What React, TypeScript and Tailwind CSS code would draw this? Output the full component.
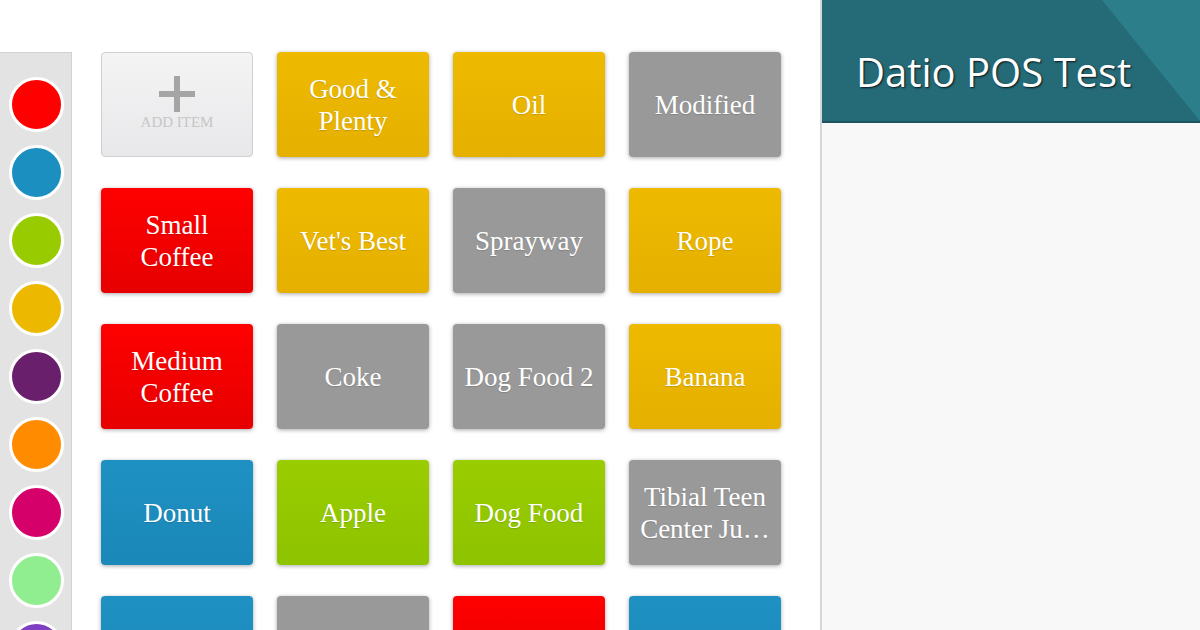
import React from "react";

type Tile = { label: string; color: string };

const swatches = [
  "bg-[#ff0000]",
  "bg-[#1b8fc0]",
  "bg-[#99cc00]",
  "bg-[#ecb800]",
  "bg-[#6a1f6d]",
  "bg-[#ff8c00]",
  "bg-[#d6006b]",
  "bg-[#90ee90]",
  "bg-[#7e3fc0]",
];

const colors: Record<string, string> = {
  yellow: "bg-gradient-to-b from-[#eeba00] to-[#e5b000]",
  gray: "bg-[#999999]",
  red: "bg-gradient-to-b from-[#ff0000] to-[#e60000]",
  blue: "bg-gradient-to-b from-[#1e91c2] to-[#1a88b9]",
  green: "bg-gradient-to-b from-[#9acd00] to-[#8dc300]",
};

const tiles: Tile[] = [
  { label: "Good & Plenty", color: "yellow" },
  { label: "Oil", color: "yellow" },
  { label: "Modified", color: "gray" },
  { label: "Small Coffee", color: "red" },
  { label: "Vet's Best", color: "yellow" },
  { label: "Sprayway", color: "gray" },
  { label: "Rope", color: "yellow" },
  { label: "Medium Coffee", color: "red" },
  { label: "Coke", color: "gray" },
  { label: "Dog Food 2", color: "gray" },
  { label: "Banana", color: "yellow" },
  { label: "Donut", color: "blue" },
  { label: "Apple", color: "green" },
  { label: "Dog Food", color: "green" },
  { label: "Tibial Teen Center Ju…", color: "gray" },
  { label: "", color: "blue" },
  { label: "", color: "gray" },
  { label: "", color: "red" },
  { label: "", color: "blue" },
];

export default function App() {
  return (
    <div className="flex w-[1200px] h-[630px] overflow-hidden bg-white">
      {/* Item area */}
      <main className="flex w-[820px] pt-[52px]">
        {/* Colour filter rail */}
        <aside className="w-[72px] shrink-0 bg-[#e3e3e3] border-r border-t border-[#d2d2d2] flex flex-col items-center pt-[24px] gap-[13px] pl-[1px]">
          {swatches.map((c, i) => (
            <div
              key={i}
              className={`w-[55px] h-[55px] shrink-0 rounded-full border-[3px] border-white ${c}`}
            ></div>
          ))}
        </aside>

        <div className="ml-[29px] grid grid-cols-[repeat(4,152px)] auto-rows-[105px] gap-x-[24px] gap-y-[31px]">
          {/* Add item */}
          <div className="rounded-[4px] border border-[#cfcfd2] bg-gradient-to-b from-[#f4f4f5] to-[#e8e8ea] flex flex-col items-center justify-center">
            <div className="relative w-[36px] h-[36px] mt-[-4px]">
              <div className="absolute left-0 right-0 top-[15px] h-[6px] bg-[#a5a5a5]"></div>
              <div className="absolute top-0 bottom-0 left-[15px] w-[6px] bg-[#a5a5a5]"></div>
            </div>
            <span className="mt-[3px] text-[15px] leading-none text-[#c6c6c6] font-['Liberation_Serif',serif]">
              ADD ITEM
            </span>
          </div>

          {tiles.map((t, i) => (
            <div
              key={i}
              className={`rounded-[4px] shadow-[0_1px_4px_rgba(0,0,0,0.35)] flex items-center justify-center px-[8px] text-center text-white text-[27px] leading-[32px] font-['Liberation_Serif',serif] [text-shadow:0_1px_1px_rgba(0,0,0,0.15)] ${colors[t.color]}`}
            >
              {t.label}
            </div>
          ))}
        </div>
      </main>

      {/* Order panel */}
      <section className="w-[380px] shrink-0 border-l-2 border-[#d6d6d6] bg-[#f8f8f8] flex flex-col">
        <header className="relative h-[123px] bg-[#256b77] border-b-2 border-[#1c5560] overflow-hidden">
          <svg className="absolute inset-0" width="378" height="121" viewBox="0 0 378 121">
            <polygon points="280,0 378,0 378,121" fill="#2c7e8b" />
          </svg>
          <h1 className="relative pl-[34px] pt-[50px] text-white text-[40px] leading-[44px] font-['Open_Sans',sans-serif] [text-shadow:1px_1px_2px_rgba(0,0,0,0.8)]">
            Datio POS Test
          </h1>
        </header>
      </section>
    </div>
  );
}
